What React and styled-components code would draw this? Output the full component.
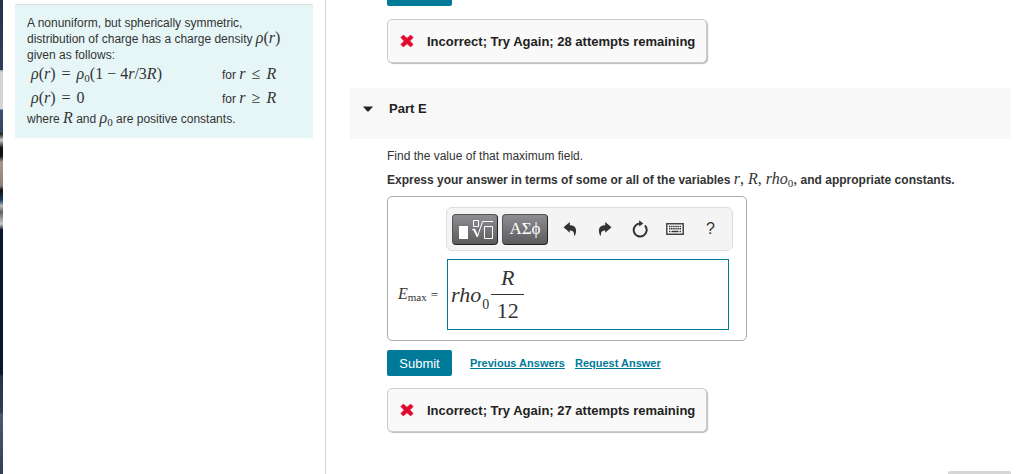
import React from "react"
import styled, { createGlobalStyle } from "styled-components"

const App = () => {
  return (
    <Page>
      <GlobalStyle />
      <DesktopEdge />
      <ProblemPane>
        <ProblemCard>
          <p>
            A nonuniform, but spherically symmetric,
            <br />
            distribution of charge has a charge density{" "}
            <MathText>
              <i>ρ</i>(<i>r</i>)
            </MathText>
            <br />
            given as follows:
          </p>
          <Cases>
            <MathText>
              <i>ρ</i>(<i>r</i>)<Relation> = </Relation>
              <i>ρ</i>
              <Sub>0</Sub>(1 − 4<i>r</i>/3<i>R</i>)
            </MathText>
            <span>
              for{" "}
              <MathText>
                <i>r</i>
                <Relation> ≤ </Relation>
                <i>R</i>
              </MathText>
            </span>
            <MathText>
              <i>ρ</i>(<i>r</i>)<Relation> = </Relation>0
            </MathText>
            <span>
              for{" "}
              <MathText>
                <i>r</i>
                <Relation> ≥ </Relation>
                <i>R</i>
              </MathText>
            </span>
          </Cases>
          <p>
            where{" "}
            <MathText>
              <i>R</i>
            </MathText>{" "}
            and{" "}
            <MathText>
              <i>ρ</i>
              <Sub>0</Sub>
            </MathText>{" "}
            are positive constants.
          </p>
        </ProblemCard>
      </ProblemPane>

      <PartsPane>
        <Section>
          <SubmitEdge aria-label="Submit previous part" />
          <Feedback attempts={28} />
        </Section>

        <PartHeader>
          <PartToggle aria-expanded="true">
            <svg width="10" height="6" viewBox="0 0 10 6">
              <path d="M0 0.5h10L5.8 5.2q-.8.7-1.6 0z" fill="#222" />
            </svg>
            Part E
          </PartToggle>
        </PartHeader>

        <Section>
          <Prompt>Find the value of that maximum field.</Prompt>
          <Prompt $bold>
            Express your answer in terms of some or all of the variables{" "}
            <MathText>
              <i>r</i>, <i>R</i>, <i>rho</i>
              <Sub>0</Sub>,
            </MathText>{" "}
            and appropriate constants.
          </Prompt>
          <AnswerBox>
            <AnswerLabel id="answer-label">
              <i>E</i>
              <LabelSub>max</LabelSub> <Equals>=</Equals>
            </AnswerLabel>
            <Editor>
              <Toolbar>
                <PaletteButton aria-label="Templates">
                  <TemplateIcon />
                </PaletteButton>
                <PaletteButton aria-label="Symbols">ΑΣϕ</PaletteButton>
                <Tools>
                  <ToolButton aria-label="Undo">
                    <UndoIcon />
                  </ToolButton>
                  <ToolButton aria-label="Redo">
                    <RedoIcon />
                  </ToolButton>
                  <ToolButton aria-label="Reset">
                    <ResetIcon />
                  </ToolButton>
                  <ToolButton aria-label="Keyboard shortcuts">
                    <KeyboardIcon />
                  </ToolButton>
                  <ToolButton aria-label="Help">?</ToolButton>
                </Tools>
              </Toolbar>
              <MathField
                role="textbox"
                tabIndex={0}
                aria-labelledby="answer-label"
              >
                <i>rho</i>
                <FieldSub>0</FieldSub>
                <Fraction>
                  <Numerator>R</Numerator>
                  <span>12</span>
                </Fraction>
              </MathField>
            </Editor>
          </AnswerBox>
          <Actions>
            <SubmitButton>Submit</SubmitButton>
            <ActionLink href="#previous">Previous Answers</ActionLink>
            <ActionLink href="#request">Request Answer</ActionLink>
          </Actions>
          <Feedback attempts={27} />
        </Section>
        <NextEdge aria-label="Next" />
      </PartsPane>
    </Page>
  )
}

export default App

const Feedback = ({ attempts }) => (
  <FeedbackBox>
    <svg width="14" height="14" viewBox="0 0 14 14">
      <path
        d="M3.3 1.2 7 4.4l3.7-3.2 2.3 2.4L9.6 7l3.4 3.4-2.3 2.4L7 9.6l-3.7 3.2L1 10.4 4.4 7 1 3.6z"
        fill="#e0092d"
        stroke="#e0092d"
        strokeLinejoin="round"
      />
    </svg>
    Incorrect; Try Again; {attempts} attempts remaining
  </FeedbackBox>
)

const TemplateIcon = () => (
  <svg width="36" height="22" viewBox="0 0 36 22" fill="none" stroke="#fff">
    <path d="M2 8h9v13H2z" fill="#fff" stroke="none" />
    <path d="M16.5 2.5h5v6h-5z" />
    <path d="M15 12l2-1 3.500 7.500 5-15H36" />
    <path d="M17 11l3.500 7.500" strokeWidth="1.800" />
    <path d="M27.500 8.500h8v12h-8z" />
  </svg>
)

const UndoIcon = () => (
  <svg width="14" height="14" viewBox="0 0 14 14">
    <path
      d="M.5 5.200 6.800 0v3.200c4.200 0 6.300 2.200 6.300 5.400 0 1.800-.4 3.200-1.100 4.900h-1c.3-3.600-.9-5.100-4.200-5.100v2.400z"
      fill="#333"
    />
  </svg>
)

const RedoIcon = () => (
  <svg width="14" height="14" viewBox="0 0 14 14">
    <path
      d="M13.500 5.200 7.200 0v3.200C3 3.200.9 5.400.9 8.600c0 1.800.4 3.200 1.100 4.900h1c-.3-3.600.9-5.100 4.200-5.100v2.400z"
      fill="#333"
    />
  </svg>
)

const ResetIcon = () => (
  <svg width="16" height="18" viewBox="0 0 16 18">
    <path
      d="M12.900 5.500A6.500 6.500 0 1 1 8.200 3.500"
      fill="none"
      stroke="#333"
      strokeWidth="2"
    />
    <path d="M7.200.3 11.300 3.400 7.200 6.500z" fill="#333" />
  </svg>
)

const KeyboardIcon = () => (
  <svg width="18" height="12" viewBox="0 0 18 12">
    <path d="M.8.800h16.400v10.400H.8z" fill="#fff" stroke="#444" strokeWidth="1.500" />
    <path
      d="M3 3.500h12M3 5.800h12"
      stroke="#333"
      strokeWidth="1.400"
      strokeDasharray="1.500 .6"
    />
    <path d="M3 8.500h1.500M5.500 8.500h7M13.500 8.500H15" stroke="#333" strokeWidth="1.400" />
  </svg>
)

const GlobalStyle = createGlobalStyle`
  * {
    box-sizing: border-box;
  }
  body {
    margin: 0;
    background: #fff;
    color: #333;
    font-family: "Liberation Sans", Arial, sans-serif;
    font-size: 12px;
  }
  p {
    margin: 0;
  }
  button {
    font-family: inherit;
    border: 0;
    padding: 0;
    cursor: pointer;
  }
`

const Page = styled.div`
  display: flex;
  min-height: 100vh;
`

const DesktopEdge = styled.div`
  width: 3px;
  flex-shrink: 0;
  background: linear-gradient(
    #24304c 0,
    #303f60 70px,
    #999 70px,
    #d4d4d4 72px,
    #d4d4d4 109px,
    #3c5072 110px,
    #344563 132px,
    #222 134px,
    #ccc 140px,
    #111 148px,
    #111 156px,
    #a8988f 162px,
    #8c7d76 186px,
    #111 190px,
    #1c3b66 200px,
    #bbb 206px,
    #655e58 212px,
    #ccc 224px,
    #0c1530 230px,
    #0b1430 374px,
    #26344c 376px,
    #2e3d58 413px,
    #4c5a72 414px,
    #303f5a 100%
  );
`

const ProblemPane = styled.aside`
  width: 323px;
  flex-shrink: 0;
  padding: 4px 12px;
  border-right: 1px solid #c9d5dc;
`

const ProblemCard = styled.div`
  padding: 10px 12px 11px;
  background: #e6f6f7;
  border-top: 1px solid #d9e2e3;
  line-height: 16px;
`

// line-height 0 keeps the larger serif from stretching the lines around it
const MathText = styled.span`
  font-family: "Liberation Serif", "Times New Roman", serif;
  font-size: 16px;
  font-weight: normal;
  line-height: 0;
  white-space: nowrap;
`

const Relation = styled.span`
  margin: 0 2px;
`

const Sub = styled.sub`
  font-size: 11px;
  line-height: 0;
  vertical-align: -3px;
`

const Cases = styled.div`
  display: grid;
  grid-template-columns: 191px 1fr;
  align-items: baseline;
  padding-left: 4px;
  line-height: 24px;
`

const PartsPane = styled.main`
  flex: 1;
  min-width: 0;
  display: flex;
  flex-direction: column;
  padding: 0 13px 0 24px;
`

const Section = styled.section`
  padding-left: 37px;
`

const SubmitEdge = styled.button`
  display: block;
  width: 65px;
  height: 6px;
  margin-bottom: 13px;
  background: #007a99;
  border-radius: 0 0 2px 2px;
`

const FeedbackBox = styled.div`
  display: flex;
  align-items: center;
  gap: 13px;
  width: fit-content;
  height: 44px;
  padding: 0 11px 0 12px;
  background: #f9f9f9;
  border: 1px solid #ccc;
  border-radius: 5px;
  box-shadow: 1px 1px 1px #bbb;
  color: #222;
  font-size: 13px;
  font-weight: bold;
`

const PartHeader = styled.header`
  height: 51px;
  margin: 25px 0 9px;
  padding: 12px 13px;
  background: #f8f8f8;
`

const PartToggle = styled.button`
  display: flex;
  align-items: center;
  gap: 16px;
  background: none;
  color: #222;
  font-size: 13px;
  font-weight: bold;
  line-height: 18px;
`

const Prompt = styled.p`
  font-weight: ${(props) => (props.$bold ? "bold" : "normal")};
  line-height: 16px;
  margin-bottom: 8px;
`

const AnswerBox = styled.div`
  display: flex;
  width: 360px;
  max-width: 100%;
  padding: 10px 13px 10px 10px;
  border: 1px solid #aaa;
  border-radius: 5px;
`

const AnswerLabel = styled.div`
  width: 48px;
  flex-shrink: 0;
  padding-top: 78px;
  font-family: "Liberation Serif", "Times New Roman", serif;
  font-size: 16px;
  line-height: 18px;
  white-space: nowrap;
`

const LabelSub = styled.sub`
  font-size: 11px;
  line-height: 0;
  vertical-align: -2px;
`

const Equals = styled.span`
  font-size: 13px;
`

const Editor = styled.div`
  flex: 1;
`

const Toolbar = styled.div`
  display: flex;
  align-items: center;
  gap: 4px;
  height: 44px;
  padding: 0 4px 0 5px;
  background: #f4f4f4;
  border: 1px solid #ddd;
  border-radius: 6px;
`

const PaletteButton = styled.button`
  display: flex;
  align-items: center;
  justify-content: center;
  width: 46px;
  height: 31px;
  background: linear-gradient(#8e8e93, #5c5c5e);
  border: 1px solid #555;
  border-right-color: #222;
  border-bottom-color: #222;
  border-radius: 4px;
  color: #fff;
  font-family: "Liberation Serif", "Times New Roman", serif;
  font-size: 17px;
`

const Tools = styled.div`
  flex: 1;
  display: flex;
`

const ToolButton = styled.button`
  flex: 1;
  display: flex;
  align-items: center;
  justify-content: center;
  height: 30px;
  background: none;
  color: #333;
  font-size: 16px;
`

const MathField = styled.div`
  display: flex;
  align-items: center;
  height: 71px;
  margin: 8px 4px 0 1px;
  padding: 0 3px;
  border: 1px solid #007a99;
  font-family: "Liberation Serif", "Times New Roman", serif;
  font-size: 22px;
  line-height: 24px;
`

const FieldSub = styled.sub`
  padding: 20px 2px 0 1px;
  font-size: 14px;
  line-height: 16px;
`

const Fraction = styled.span`
  display: flex;
  flex-direction: column;
  align-items: center;
  width: 33px;
  line-height: 32px;
`

const Numerator = styled.i`
  width: 100%;
  border-bottom: 1px solid #333;
  text-align: center;
`

const Actions = styled.div`
  display: flex;
  align-items: center;
  gap: 10px;
  margin: 9px 0 12px;
`

const SubmitButton = styled.button`
  width: 65px;
  height: 26px;
  margin-right: 8px;
  background: #007a99;
  border-radius: 2px;
  color: #fff;
  font-size: 13px;
`

const ActionLink = styled.a`
  color: #007a99;
  font-size: 11px;
  font-weight: bold;
`

const NextEdge = styled.button`
  width: 63px;
  height: 3px;
  margin-top: auto;
  margin-left: auto;
  background: #d6d6d6;
  border-radius: 2px 2px 0 0;
`
